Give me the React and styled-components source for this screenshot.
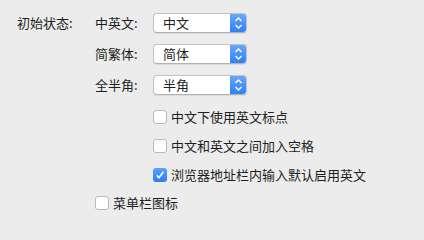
import React from "react";
import styled, { createGlobalStyle } from "styled-components";

const GlobalStyle = createGlobalStyle`
  html, body {
    margin: 0;
    padding: 0;
    background: #ececec;
  }
  body {
    font-family: "Noto Sans CJK SC", "Noto Sans", sans-serif;
    font-size: 13px;
    color: #1e1e1e;
  }
`;

const Page = styled.div`
  width: 424px;
  height: 219px;
  box-sizing: border-box;
  padding: 13px 0 0 17px;
  background: #ececec;
`;

const Group = styled.div`
  display: grid;
  grid-template-columns: 78px 58px 94px;
  grid-auto-rows: 20px;
  row-gap: 11px;
  align-items: center;
`;

const Label = styled.div`
  white-space: nowrap;
  line-height: 20px;
`;

const Popup = styled.div`
  display: flex;
  height: 20px;
  box-sizing: border-box;
  border: 1px solid #c4c4c4;
  border-bottom-color: #b2b2b2;
  border-radius: 4px;
  background: #fff;
  overflow: hidden;
  box-shadow: 0 0.5px 1px rgba(0, 0, 0, 0.08);
`;

const PopupText = styled.div`
  flex: 1;
  padding-left: 9px;
  line-height: 18px;
`;

const Stepper = styled.div`
  width: 17px;
  display: flex;
  align-items: center;
  justify-content: center;
  background: linear-gradient(#69a9fa, #2d7ff7);
  margin: -1px -1px -1px 0;
`;

const Options = styled.div`
  display: flex;
  flex-direction: column;
  gap: 15px;
  padding: 15px 0 0 136px;
`;

const CheckRow = styled.label`
  display: flex;
  align-items: center;
  gap: 4px;
  height: 14px;
  margin-left: ${p => p.indent || 0}px;
`;

const Box = styled.span`
  width: 14px;
  height: 14px;
  box-sizing: border-box;
  border-radius: 3px;
  flex-shrink: 0;
  display: flex;
  align-items: center;
  justify-content: center;
  background: ${p => (p.checked ? "linear-gradient(#5aa2fa, #2a7df5)" : "#fff")};
  border: ${p => (p.checked ? "none" : "1px solid #b9b9b9")};
`;

const CheckText = styled.span`
  white-space: nowrap;
  line-height: 14px;
`;

const Footer = styled.div`
  padding: 14px 0 0 78px;
`;

const Arrows = () => (
  <svg width="9" height="14" viewBox="0 0 9 14">
    <path d="M1.5 5 L4.5 2 L7.5 5" fill="none" stroke="#fff" strokeWidth="1.4" />
    <path d="M1.5 9 L4.5 12 L7.5 9" fill="none" stroke="#fff" strokeWidth="1.4" />
  </svg>
);

const Check = () => (
  <svg width="10" height="10" viewBox="0 0 10 10">
    <path d="M1.8 5.4 L4 7.8 L8.4 1.8" fill="none" stroke="#fff" strokeWidth="1.6" />
  </svg>
);

const Select = ({ value }) => (
  <Popup>
    <PopupText>{value}</PopupText>
    <Stepper>
      <Arrows />
    </Stepper>
  </Popup>
);

const Checkbox = ({ checked, children, indent }) => (
  <CheckRow indent={indent}>
    <Box checked={checked}>{checked && <Check />}</Box>
    <CheckText>{children}</CheckText>
  </CheckRow>
);

const App = () => (
  <>
    <GlobalStyle />
    <Page>
      <Group>
        <Label>初始状态:</Label>
        <Label>中英文:</Label>
        <Select value="中文" />
        <span />
        <Label>简繁体:</Label>
        <Select value="简体" />
        <span />
        <Label>全半角:</Label>
        <Select value="半角" />
      </Group>
      <Options>
        <Checkbox>中文下使用英文标点</Checkbox>
        <Checkbox>中文和英文之间加入空格</Checkbox>
        <Checkbox checked>浏览器地址栏内输入默认启用英文</Checkbox>
      </Options>
      <Footer>
        <Checkbox>菜单栏图标</Checkbox>
      </Footer>
    </Page>
  </>
);

export default App;
